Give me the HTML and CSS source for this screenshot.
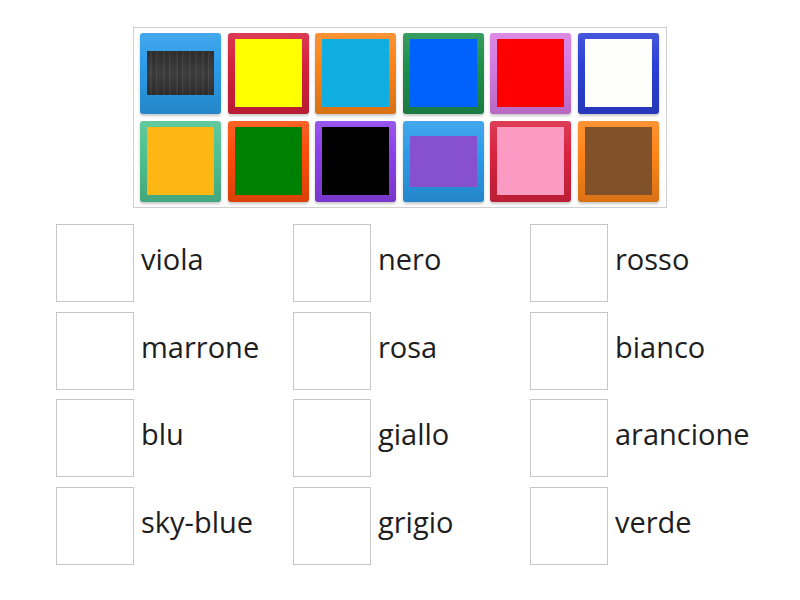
FILE: index.html
```html
<!DOCTYPE html>
<html lang="it">
<head>
<meta charset="utf-8">
<title>Colori</title>
<link rel="stylesheet" href="styles.css">
</head>
<body>
<div class="page">
  <div class="tray">
    <div class="tile t1"><div class="img stripes"></div></div>
    <div class="tile t2"><div class="fill"></div></div>
    <div class="tile t3"><div class="fill"></div></div>
    <div class="tile t4"><div class="fill"></div></div>
    <div class="tile t5"><div class="fill"></div></div>
    <div class="tile t6"><div class="fill"></div></div>
    <div class="tile t7"><div class="fill"></div></div>
    <div class="tile t8"><div class="fill"></div></div>
    <div class="tile t9"><div class="fill"></div></div>
    <div class="tile t10"><div class="img purple"></div></div>
    <div class="tile t11"><div class="fill"></div></div>
    <div class="tile t12"><div class="fill"></div></div>
  </div>
  <div class="targets">
    <div class="cell"><div class="slot"></div><span class="label">viola</span></div>
    <div class="cell"><div class="slot"></div><span class="label">nero</span></div>
    <div class="cell"><div class="slot"></div><span class="label">rosso</span></div>
    <div class="cell"><div class="slot"></div><span class="label">marrone</span></div>
    <div class="cell"><div class="slot"></div><span class="label">rosa</span></div>
    <div class="cell"><div class="slot"></div><span class="label">bianco</span></div>
    <div class="cell"><div class="slot"></div><span class="label">blu</span></div>
    <div class="cell"><div class="slot"></div><span class="label">giallo</span></div>
    <div class="cell"><div class="slot"></div><span class="label">arancione</span></div>
    <div class="cell"><div class="slot"></div><span class="label">sky-blue</span></div>
    <div class="cell"><div class="slot"></div><span class="label">grigio</span></div>
    <div class="cell"><div class="slot"></div><span class="label">verde</span></div>
  </div>
</div>
</body>
</html>
```

FILE: styles.css
```css
html, body {
  margin: 0;
  padding: 0;
  background: #ffffff;
}
body {
  font-family: "Open Sans", "Noto Sans", sans-serif;
  color: #1e1e1e;
}
.page {
  width: 800px;
  height: 600px;
  padding-top: 27px;
  box-sizing: border-box;
}
.tray {
  width: 534px;
  box-sizing: border-box;
  margin: 0 0 0 133px;
  border: 1px solid #cfcfcf;
  padding: 5px 7px 5px 6px;
  display: grid;
  grid-template-columns: repeat(6, 81px);
  grid-auto-rows: 81px;
  column-gap: 6.5px;
  row-gap: 7px;
}
.tile {
  position: relative;
  box-sizing: border-box;
  border-radius: 3px;
  padding: 6px 7px 7px 7px;
  display: flex;
  align-items: center;
  justify-content: center;
  box-shadow: 0 2px 3px rgba(0,0,0,0.22);
  background-image: linear-gradient(to bottom, rgba(255,255,255,0.12), rgba(0,0,0,0) 40%, rgba(0,0,0,0.14));
}
.fill {
  width: 100%;
  height: 100%;
}
.img {
  width: 67px;
}
.stripes {
  height: 44px;
  background-color: #3a3a3a;
  background-image:
    linear-gradient(to bottom, rgba(0,0,0,0.15), rgba(255,255,255,0.04) 50%, rgba(0,0,0,0.15)),
    repeating-linear-gradient(90deg, #353535 0 3px, #404040 3px 5px, #333333 5px 9px, #464646 9px 10px, #383838 10px 13px);
}
.purple {
  height: 51px;
  background: #8750cf;
}
.t1 { background-color: #2b9ce9; }
.t2 { background-color: #d5213c; }
.t2 .fill { background: #ffff00; }
.t3 { background-color: #fa8419; }
.t3 .fill { background: #10ade1; }
.t4 { background-color: #1e8f4c; }
.t4 .fill { background: #0062fe; }
.t5 { background-color: #d57be0; }
.t5 .fill { background: #fe0000; }
.t6 { background-color: #2c40d6; }
.t6 .fill { background: #fefefd; }
.t7 { background-color: #4fc192; }
.t7 .fill { background: #fdb714; }
.t8 { background-color: #fe4c0b; }
.t8 .fill { background: #008000; }
.t9 { background-color: #8b40ea; }
.t9 .fill { background: #000000; }
.t10 { background-color: #2b9ce9; }
.t11 { background-color: #d9233f; }
.t11 .fill { background: #fb9bc4; }
.t12 { background-color: #fd8519; }
.t12 .fill { background: #81522a; }

.targets {
  margin-top: 16px;
  padding-left: 56px;
  display: grid;
  grid-template-columns: repeat(3, 237px);
  grid-auto-rows: 78px;
  row-gap: 9.67px;
}
.cell {
  display: flex;
  align-items: center;
}
.slot {
  width: 78px;
  height: 78px;
  box-sizing: border-box;
  border: 1px solid #c6c6c6;
  flex: none;
}
.label {
  margin-left: 7px;
  font-size: 29px;
  line-height: 40px;
  position: relative;
  top: -4px;
}
```
